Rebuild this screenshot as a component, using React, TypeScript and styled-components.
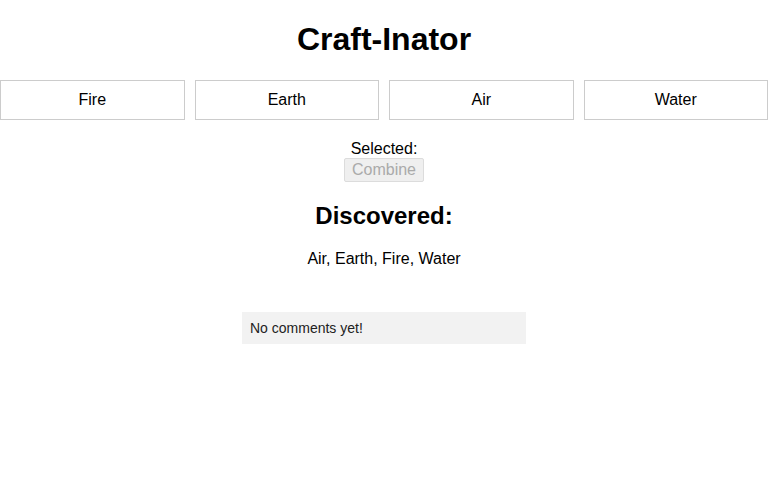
import React from "react";
import styled, { createGlobalStyle } from "styled-components";

const Global = createGlobalStyle`
  html, body { margin: 0; padding: 0; background: #fff; }
  body { font-family: "Liberation Sans", Arial, sans-serif; color: #000; }
`;

const Page = styled.div`
  display: flex;
  flex-direction: column;
  align-items: center;
  text-align: center;
`;

const Title = styled.h1`
  font-size: 32px;
  font-weight: bold;
  line-height: 37px;
  margin: 21px 0 22px;
`;

const ElementRow = styled.div`
  align-self: stretch;
  display: grid;
  grid-template-columns: repeat(4, 1fr);
  gap: 10px;
`;

const ElementButton = styled.button`
  height: 40px;
  background: #fff;
  border: 1px solid #ccc;
  font-family: "Liberation Sans", Arial, sans-serif;
  font-size: 16px;
  color: #000;
  padding: 0;
  cursor: pointer;
`;

const Selected = styled.div`
  margin-top: 20px;
  font-size: 16px;
  line-height: 18px;
`;

const CombineButton = styled.button`
  font-family: "Liberation Sans", Arial, sans-serif;
  font-size: 16px;
  line-height: 18px;
  padding: 2px 7px;
  background: #efefef;
  color: #aaa;
  border: 1px solid #dcdcdc;
  border-radius: 2px;
`;

const SubTitle = styled.h2`
  font-size: 24px;
  font-weight: bold;
  line-height: 28px;
  margin: 20px 0 20px;
`;

const Discovered = styled.p`
  font-size: 16px;
  line-height: 18px;
  margin: 0 0 44px;
`;

const Comments = styled.div`
  width: 284px;
  box-sizing: border-box;
  padding: 8px;
  background: #f2f2f2;
  color: #222;
  font-size: 14px;
  line-height: 16px;
  text-align: left;
`;

export default function App() {
  const elements = ["Fire", "Earth", "Air", "Water"];
  return (
    <>
      <Global />
      <Page>
        <Title>Craft-Inator</Title>
        <ElementRow>
          {elements.map((e) => (
            <ElementButton key={e}>{e}</ElementButton>
          ))}
        </ElementRow>
        <Selected>Selected:</Selected>
        <CombineButton disabled>Combine</CombineButton>
        <SubTitle>Discovered:</SubTitle>
        <Discovered>Air, Earth, Fire, Water</Discovered>
        <Comments>No comments yet!</Comments>
      </Page>
    </>
  );
}
